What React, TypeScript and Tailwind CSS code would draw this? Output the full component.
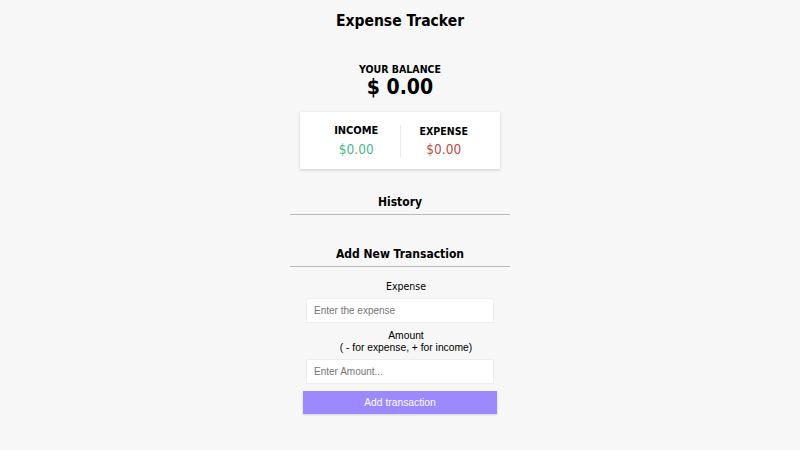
const cond = "font-['DejaVu_Sans_Condensed','DejaVu_Sans',sans-serif]"
const arial = "font-['Liberation_Sans',Arial,sans-serif]"

export default function App() {
  return (
    <div className={`min-h-[450px] bg-[#f7f7f7] flex flex-col items-center text-black ${cond}`}>
      <h1 className="mt-[10px] text-[15.5px] font-bold leading-[22px]">Expense Tracker</h1>
      <div className="w-[220px] flex flex-col items-center">
        <h4 className="mt-[30px] text-[10.5px] font-bold leading-[14px]">YOUR BALANCE</h4>
        <h2 className="text-[21px] font-bold leading-[22px]">$ 0.00</h2>
        <div className="mt-[14px] w-[200px] h-[57px] px-[13px] bg-white shadow-[0_1px_3px_rgba(0,0,0,0.18)] flex items-center">
          <div className="flex-1 flex flex-col items-center">
            <h4 className="text-[11px] font-bold leading-[14px]">INCOME</h4>
            <p className="mt-[3px] text-[13.5px] leading-[16px] text-[#45bd83]">$0.00</p>
          </div>
          <div className="w-px h-[32px] bg-[#ececec]" />
          <div className="flex-1 flex flex-col items-center">
            <h4 className="text-[10.5px] font-bold leading-[14px]">EXPENSE</h4>
            <p className="mt-[3px] text-[13.5px] leading-[16px] text-[#b94a42]">$0.00</p>
          </div>
        </div>
        <h3 className="mt-[24px] w-full text-center text-[12px] font-bold leading-[18px] pb-[3px] border-b border-[#bbbbbb]">History</h3>
        <h3 className="mt-[30px] w-full text-center text-[12px] font-bold leading-[18px] pb-[3px] border-b border-[#bbbbbb]">Add New Transaction</h3>
        <label className="mt-[12px] ml-[12px] text-[10.5px] leading-[14px]">Expense</label>
        <input
          className={`mt-[5px] w-[188px] h-[25px] bg-white border border-[#eeeeee] px-[7px] text-[10px] placeholder:text-[#757575] outline-none ${arial}`}
          placeholder="Enter the expense"
        />
        <label className={`mt-[7px] ml-[12px] text-center text-[10.3px] leading-[12px] ${arial}`}>
          Amount
          <br />( - for expense, + for income)
        </label>
        <input
          className={`mt-[5px] w-[188px] h-[25px] bg-white border border-[#eeeeee] px-[7px] text-[10px] placeholder:text-[#757575] outline-none ${arial}`}
          placeholder="Enter Amount..."
        />
        <button className={`mt-[7px] w-[194px] h-[23px] bg-[#9c88ff] text-white text-[10.3px] shadow-[0_1px_2px_rgba(0,0,0,0.15)] ${arial}`}>
          Add transaction
        </button>
      </div>
    </div>
  )
}
